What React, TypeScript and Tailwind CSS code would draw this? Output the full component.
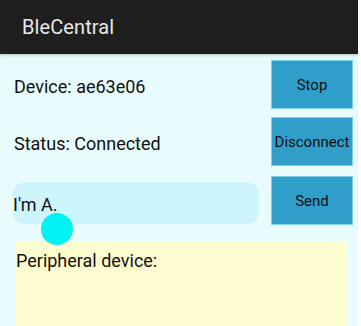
import React from 'react';

const font = { fontFamily: 'Roboto, "Noto Sans", sans-serif' };

function ActionButton({ label }: { label: string }) {
  return (
    <button className="w-[82px] h-[49px] shrink-0 bg-[#2f9ec9] border border-[#7cd0ea] text-[15px] text-[#111] flex items-center justify-center pt-[2px]">
      {label}
    </button>
  );
}

export default function App() {
  return (
    <div className="w-[358px] h-[326px] overflow-hidden bg-[#e8fcfe] text-[#111]" style={font}>
      <header className="h-[54px] bg-[#1e1e1e] flex items-center pl-[22px] shadow-[0_1px_3px_rgba(0,0,0,0.25)]">
        <h1 className="text-[20px] text-[#e8e8e8] tracking-[0.1px]">BleCentral</h1>
      </header>

      <div className="pt-[6px] pr-[5px]">
        <div className="flex items-center justify-between pl-[14px]">
          <span className="text-[18px] pt-1">Device: ae63e06</span>
          <ActionButton label="Stop" />
        </div>

        <div className="flex items-center justify-between pl-[14px] mt-2">
          <span className="text-[18px] pt-[3px]">Status: Connected</span>
          <ActionButton label="Disconnect" />
        </div>

        <div className="flex items-start justify-between pl-[13px] mt-[10px]">
          <div className="relative mt-[6px] w-[246px] h-[42px] rounded-[12px] bg-[#ccf6fb] flex items-center pt-[2px]">
            <span className="text-[18px]">I'm A.</span>
            <span className="absolute left-[28px] top-[31px] w-[32px] h-[32px] rounded-full bg-[#00f3f3]" />
          </div>
          <ActionButton label="Send" />
        </div>
      </div>

      <div className="ml-[16px] mr-[10px] mt-[17px] h-[100px] bg-[#fdfdcf] pt-[5px]">
        <p className="text-[18px]">Peripheral device:</p>
      </div>
    </div>
  );
}
